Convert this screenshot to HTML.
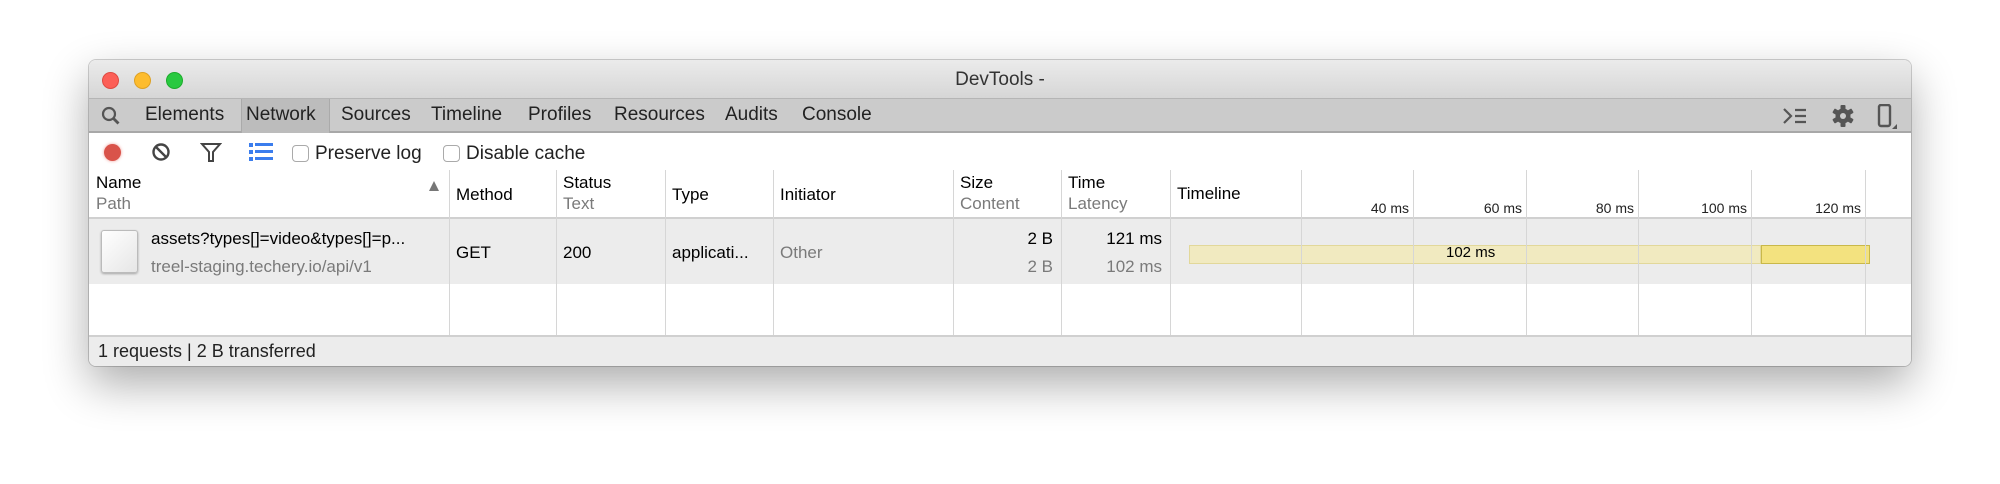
<!DOCTYPE html>
<html><head><meta charset="utf-8"><style>
*{box-sizing:border-box;margin:0;padding:0}
body{width:2000px;height:484px;background:#fff;font-family:"Liberation Sans",Arial,sans-serif;position:relative;overflow:hidden}
.win{position:absolute;left:89px;top:60px;width:1822px;height:306px;border-radius:7px;background:#fff;box-shadow:0 18px 45px rgba(0,0,0,.33),0 0 0 1px rgba(0,0,0,.18);overflow:hidden}
.title{position:absolute;left:0;top:0;width:100%;height:39px;background:linear-gradient(#ebebeb,#d6d6d6);border-bottom:1px solid #b5b5b5;text-align:center;font-size:19px;line-height:39px;color:#333}
.dot{position:absolute;top:12px;width:17px;height:17px;border-radius:50%}
.tabs{position:absolute;left:0;top:39px;width:100%;height:34px;background:#cbcbcb;border-bottom:2px solid #a8a8a8;font-size:19px;color:#222}
.tabs span{position:absolute;top:5px}
.tool{position:absolute;left:0;top:73px;width:100%;height:37px;font-size:19px;color:#222}
.cb{position:absolute;top:12px;width:17px;height:17px;border:1px solid #aaa;border-radius:4px;background:#fff}
.hdr{position:absolute;left:0;top:110px;width:100%;height:49px;border-bottom:2px solid #d0d0d0;font-size:17px}
.row{position:absolute;left:0;top:159px;width:100%;height:65px;background:#ececec;font-size:17px}
.vl{position:absolute;top:110px;height:165px;width:1px;background:#d6d6d6}
.t{position:absolute;white-space:nowrap}
.g{color:#7a7a7a}
.status{position:absolute;left:0;top:275px;width:100%;height:31px;background:#ececec;border-top:2px solid #d0d0d0;font-size:18px;line-height:28px;padding-left:9px;color:#222}
.ms{position:absolute;top:30px;font-size:14px;color:#222;width:100px;text-align:right}
</style></head><body>
<div class="win">
 <div class="title">DevTools -
  <div class="dot" style="left:13px;background:#fc5f57;border:1px solid #de4a42"></div>
  <div class="dot" style="left:45px;background:#fdbc2e;border:1px solid #dea123"></div>
  <div class="dot" style="left:77px;background:#29c940;border:1px solid #1dac2c"></div>
 </div>
 <div class="tabs">
  <svg style="position:absolute;left:12px;top:7px" width="20" height="20" viewBox="0 0 20 20"><circle cx="8" cy="8" r="6" fill="none" stroke="#555" stroke-width="2.2"/><path d="M12.5 12.5l5 5" stroke="#555" stroke-width="2.8"/></svg>
  <div style="position:absolute;left:152px;top:0;width:89px;height:34px;background:#bcbcbc;border-left:1px solid #aaa;border-right:1px solid #aaa"></div>
  <span style="left:56px">Elements</span><span style="left:157px">Network</span><span style="left:252px">Sources</span><span style="left:342px">Timeline</span><span style="left:439px">Profiles</span><span style="left:525px">Resources</span><span style="left:636px">Audits</span><span style="left:713px">Console</span>
  <svg style="position:absolute;left:1693px;top:8px" width="26" height="18" viewBox="0 0 26 18"><path d="M2 2l7 7-7 7" fill="none" stroke="#555" stroke-width="2.2"/><path d="M13 3h11M13 9h11M13 15h11" stroke="#555" stroke-width="2.2"/></svg>
  <svg style="position:absolute;left:1742px;top:5px" width="24" height="24" viewBox="0 0 24 24"><g fill="#555"><circle cx="12" cy="12" r="7.5"/><rect x="9.5" y="1" width="5" height="22" rx="1"/><rect x="9.5" y="1" width="5" height="22" rx="1" transform="rotate(60 12 12)"/><rect x="9.5" y="1" width="5" height="22" rx="1" transform="rotate(120 12 12)"/></g><circle cx="12" cy="12" r="3" fill="#cbcbcb"/></svg>
  <svg style="position:absolute;left:1787px;top:5px" width="24" height="26" viewBox="0 0 24 26"><rect x="3" y="1" width="11" height="21" rx="2" fill="none" stroke="#555" stroke-width="2.4"/><path d="M16 25l5-5v5z" fill="#555"/></svg>
 </div>
 <div class="tool">
  <div style="position:absolute;left:15px;top:11px;width:17px;height:17px;border-radius:50%;background:#d9534a;box-shadow:0 0 3px #f09a95"></div>
  <svg style="position:absolute;left:62px;top:9px" width="20" height="20" viewBox="0 0 20 20"><circle cx="10" cy="10" r="7.5" fill="none" stroke="#444" stroke-width="2.4"/><path d="M5 5l10 10" stroke="#444" stroke-width="2.4"/></svg>
  <svg style="position:absolute;left:111px;top:9px" width="22" height="21" viewBox="0 0 22 21"><path d="M2 2h18l-7 8v9h-4v-9z" fill="none" stroke="#444" stroke-width="2"/></svg>
  <svg style="position:absolute;left:160px;top:10px" width="24" height="18" viewBox="0 0 24 18"><g fill="#3b7ded"><rect x="0" y="0" width="4" height="4"/><rect x="0" y="7" width="4" height="4"/><rect x="0" y="14" width="4" height="4"/><rect x="6" y="0" width="18" height="3"/><rect x="6" y="7" width="18" height="3"/><rect x="6" y="14" width="18" height="3"/></g></svg>
  <div class="cb" style="left:203px"></div><span class="t" style="left:226px;top:10px">Preserve log</span>
  <div class="cb" style="left:354px"></div><span class="t" style="left:377px;top:10px">Disable cache</span>
 </div>
 <div class="hdr">
  <span class="t" style="left:7px;top:3px">Name</span><span class="t g" style="left:7px;top:24px">Path</span>
  <svg style="position:absolute;left:339px;top:10px" width="12" height="12"><path d="M6 1L11 11H1z" fill="#777"/></svg>
  <span class="t" style="left:367px;top:15px">Method</span>
  <span class="t" style="left:474px;top:3px">Status</span><span class="t g" style="left:474px;top:24px">Text</span>
  <span class="t" style="left:583px;top:15px">Type</span>
  <span class="t" style="left:691px;top:15px">Initiator</span>
  <span class="t" style="left:871px;top:3px">Size</span><span class="t g" style="left:871px;top:24px">Content</span>
  <span class="t" style="left:979px;top:3px">Time</span><span class="t g" style="left:979px;top:24px">Latency</span>
  <span class="t" style="left:1088px;top:14px">Timeline</span>
  <span class="ms" style="left:1220px">40 ms</span><span class="ms" style="left:1333px">60 ms</span><span class="ms" style="left:1445px">80 ms</span><span class="ms" style="left:1558px">100 ms</span><span class="ms" style="left:1672px">120 ms</span>
 </div>
 <div class="row">
  <div style="position:absolute;left:12px;top:11px;width:37px;height:43px;border:1px solid #bbb;border-radius:3px;background:linear-gradient(135deg,#fff,#e6e6e6);box-shadow:0 1px 2px rgba(0,0,0,.3)"></div>
  <span class="t" style="left:62px;top:10px">assets?types[]=video&amp;types[]=p...</span>
  <span class="t g" style="left:62px;top:38px">treel-staging.techery.io/api/v1</span>
  <span class="t" style="left:367px;top:24px">GET</span>
  <span class="t" style="left:474px;top:24px">200</span>
  <span class="t" style="left:583px;top:24px">applicati...</span>
  <span class="t g" style="left:691px;top:24px">Other</span>
  <span class="t" style="left:880px;top:10px;width:84px;text-align:right">2 B</span><span class="t g" style="left:880px;top:38px;width:84px;text-align:right">2 B</span>
  <span class="t" style="left:979px;top:10px;width:94px;text-align:right">121 ms</span><span class="t g" style="left:979px;top:38px;width:94px;text-align:right">102 ms</span>
  <div style="position:absolute;left:1100px;top:26px;width:572px;height:19px;background:#f1eac0;border:1px solid #e2d89a"></div>
  <div style="position:absolute;left:1672px;top:26px;width:109px;height:19px;background:#f3e27f;border:1px solid #c9b84a"></div>
  <span class="t" style="left:1357px;top:25px;font-size:15px">102 ms</span>
 </div>
 <div class="vl" style="left:360px"></div><div class="vl" style="left:467px"></div><div class="vl" style="left:576px"></div><div class="vl" style="left:684px"></div><div class="vl" style="left:864px"></div><div class="vl" style="left:972px"></div><div class="vl" style="left:1081px"></div>
 <div class="vl" style="left:1212px"></div><div class="vl" style="left:1324px"></div><div class="vl" style="left:1437px"></div><div class="vl" style="left:1549px"></div><div class="vl" style="left:1662px"></div><div class="vl" style="left:1776px"></div>
 <div class="status">1 requests | 2 B transferred</div>
</div>
</body></html>
